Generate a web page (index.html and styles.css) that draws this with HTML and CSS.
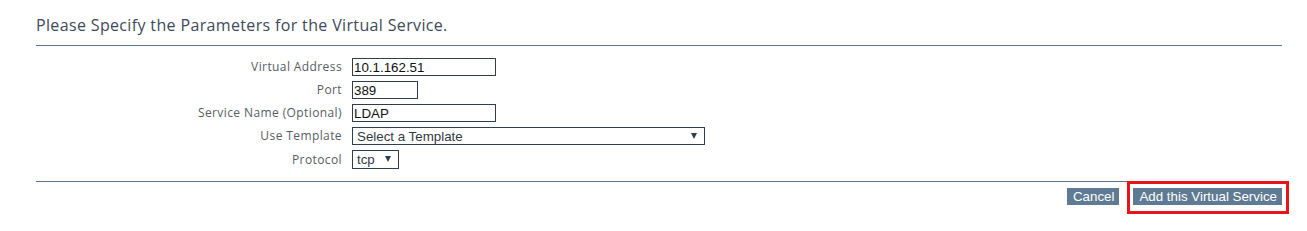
FILE: index.html
```html
<!DOCTYPE html>
<html>
<head>
  <link rel="stylesheet" href="styles.css">
</head>
<body>
  <div class="panel">
    <div class="heading">Please Specify the Parameters for the Virtual Service.</div>
    <form class="params">
      <label for="vip">Virtual Address</label>
      <input type="text" id="vip" class="wide" value="10.1.162.51">

      <label for="port">Port</label>
      <input type="text" id="port" class="narrow" value="389">

      <label for="svcName">Service Name (Optional)</label>
      <input type="text" id="svcName" class="wide" value="LDAP">

      <label for="template">Use Template</label>
      <span class="select-wrap template">
        <select id="template">
          <option>Select a Template</option>
        </select>
      </span>

      <label for="protocol">Protocol</label>
      <span class="select-wrap protocol">
        <select id="protocol">
          <option>tcp</option>
          <option>udp</option>
        </select>
      </span>
    </form>
    <div class="actions">
      <button type="button" class="btn">Cancel</button>
      <div class="highlight">
        <button type="button" class="btn">Add this Virtual Service</button>
      </div>
    </div>
  </div>
</body>
</html>
```

FILE: styles.css
```css
* {
  box-sizing: border-box;
  margin: 0;
  padding: 0;
}

body {
  background: #ffffff;
  font-family: 'Open Sans', 'Noto Sans', sans-serif;
  color: #555b63;
}

.panel {
  padding: 14px 25px 20px 36px;
}

.heading {
  font-size: 16px;
  line-height: 22px;
  color: #3e4a58;
  letter-spacing: 0.35px;
  padding-bottom: 9px;
  border-bottom: 1px solid #5b7890;
}

.params {
  display: grid;
  grid-template-columns: 306px auto;
  column-gap: 10px;
  row-gap: 5px;
  justify-items: start;
  align-items: center;
  padding: 12px 0 12px;
  border-bottom: 1px solid #5b7890;
}

.params label {
  justify-self: end;
  font-size: 12px;
  line-height: 16px;
  letter-spacing: 0.4px;
  color: #565d66;
}

input[type="text"],
select {
  display: block;
  height: 18px;
  border: 1px solid #2c3e50;
  border-radius: 0;
  background: #ffffff;
  font-family: 'Liberation Sans', Arial, sans-serif;
  font-size: 13.33px;
  color: #111111;
  padding: 0 1px;
  outline: none;
}

input.wide {
  width: 144px;
}

input.narrow {
  width: 66px;
}

select {
  appearance: none;
  -webkit-appearance: none;
  padding: 0 4px;
  color: #333a42;
}

.select-wrap {
  position: relative;
  display: block;
}

.select-wrap::after {
  content: '';
  position: absolute;
  top: 6px;
  width: 0;
  height: 0;
  border-left: 3.5px solid transparent;
  border-right: 3.5px solid transparent;
  border-top: 6px solid #2c3e50;
  pointer-events: none;
}

.template select {
  width: 353px;
}

.template::after {
  right: 8px;
}

.protocol select {
  width: 47px;
  height: 19px;
}

.protocol::after {
  right: 8px;
}

.actions {
  display: flex;
  justify-content: flex-end;
  align-items: flex-start;
  gap: 14px;
  padding-top: 6px;
}

.btn {
  display: block;
  height: 17px;
  padding: 0 5px 0 6px;
  border: none;
  background: #5e7b93;
  color: #ffffff;
  font-family: 'Liberation Sans', Arial, sans-serif;
  font-size: 13.33px;
  line-height: 17px;
  cursor: pointer;
}

/* red call-out box drawn round the primary action */
.highlight {
  border: 3px solid #e8141c;
  padding: 4px 4px 6px 3px;
  margin: -7px -7px 0 -6px;
}
```
